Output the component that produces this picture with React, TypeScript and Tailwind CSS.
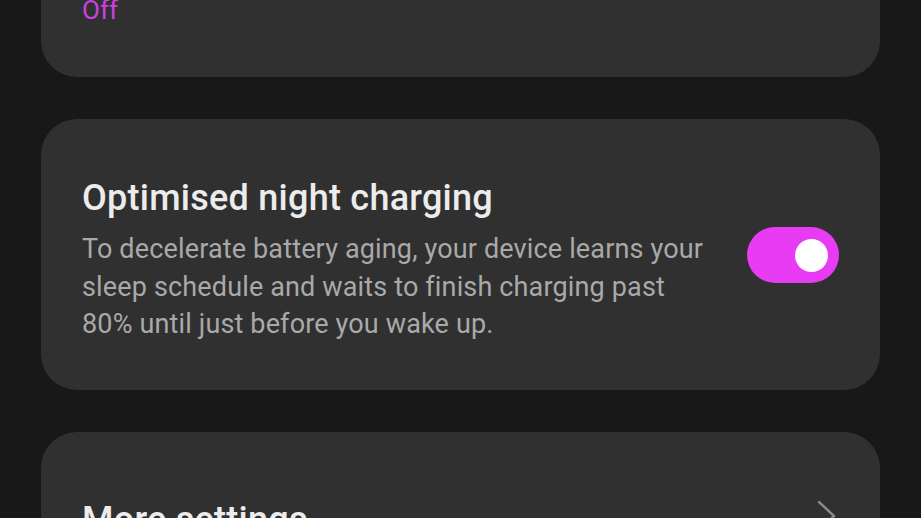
import React from "react";

function Toggle({ on }: { on: boolean }) {
  return (
    <div
      className={
        on
          ? "flex h-[56px] w-[92px] shrink-0 items-center justify-end rounded-full bg-[#e83cf4] pr-[11px]"
          : "flex h-[56px] w-[92px] shrink-0 items-center justify-start rounded-full bg-[#555] pl-[11px]"
      }
    >
      <div className="h-[33px] w-[33px] rounded-full bg-white" />
    </div>
  );
}

function Chevron() {
  return (
    <svg width="22" height="34" viewBox="0 0 22 34" className="shrink-0">
      <polyline
        points="3,3 18,17 3,31"
        fill="none"
        stroke="#8a8a8a"
        strokeWidth="2.4"
        strokeLinecap="round"
        strokeLinejoin="round"
      />
    </svg>
  );
}

export default function App() {
  return (
    <div
      className="h-[518px] overflow-hidden bg-[#181818]"
      style={{ fontFamily: "Roboto, 'Noto Sans', sans-serif" }}
    >
      <div className="-mt-[58px] flex flex-col gap-[42px] px-[41px]">
        {/* previous setting, scrolled mostly out of view */}
        <div className="rounded-[36px] bg-[#303030] px-[41px] pb-[49px] pt-[50px]">
          <p className="text-[26px] leading-[36px] text-[#cd40e2]">Off</p>
        </div>

        <div className="flex items-start justify-between gap-6 rounded-[36px] bg-[#303030] pb-[46px] pl-[41px] pr-[41px] pt-[58px]">
          <div className="max-w-[640px]">
            <h2 className="text-[36px] font-medium leading-[42px] tracking-[0.25px] text-[#ececec]">
              Optimised night charging
            </h2>
            <p className="mt-[12px] text-[27px] leading-[37.5px] tracking-[0.15px] text-[#a9a9a9]">
              To decelerate battery aging, your device learns your sleep schedule and waits to
              finish charging past 80% until just before you wake up.
            </p>
          </div>
          <div className="mt-[50px]">
            <Toggle on />
          </div>
        </div>

        <div className="flex items-start justify-between rounded-[36px] bg-[#303030] pb-[48px] pl-[41px] pr-[42px] pt-[67px]">
          <h2 className="text-[36px] font-medium leading-[42px] tracking-[0.25px] text-[#ececec]">
            More settings
          </h2>
          <Chevron />
        </div>
      </div>
    </div>
  );
}
